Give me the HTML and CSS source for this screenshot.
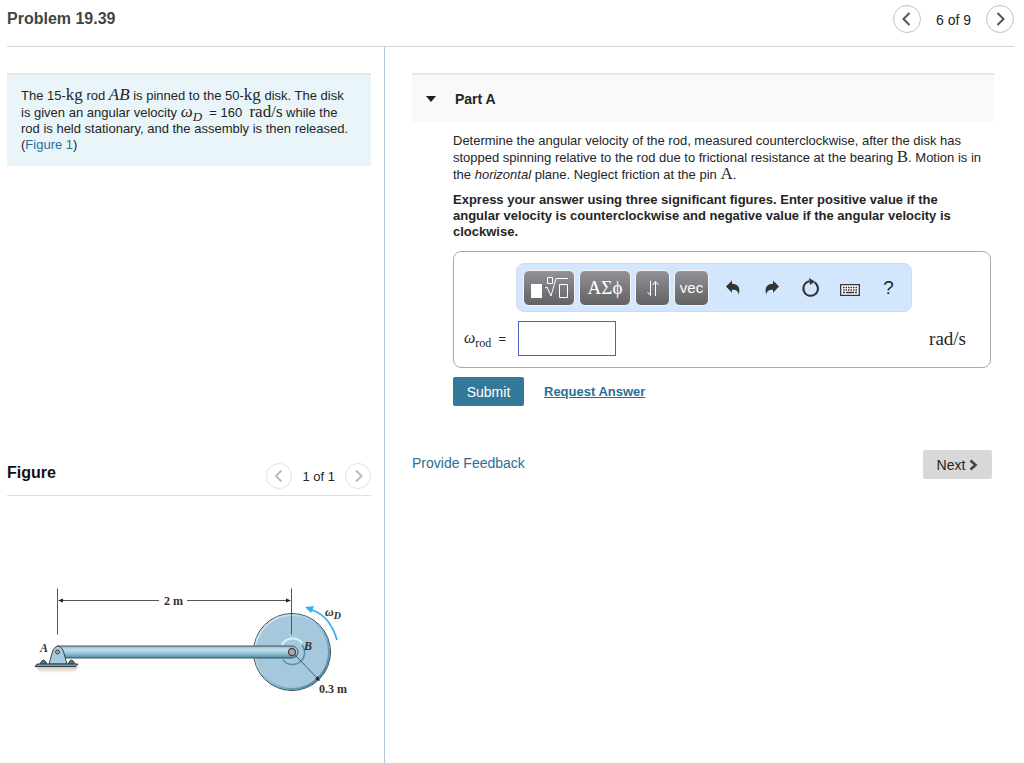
FILE: index.html
```html
<!DOCTYPE html>
<html lang="en">
<head>
<meta charset="utf-8">
<title>Problem 19.39</title>
<meta name="viewport" content="width=device-width, initial-scale=1">
<link rel="stylesheet" href="styles.css">
</head>
<body>
<header class="topbar">
  <h1 class="topbar-title">Problem 19.39</h1>
  <nav class="pager" aria-label="Problems">
    <button class="round" type="button" aria-label="Previous problem"><svg width="26" height="26" viewBox="0 0 26 26"><path d="M15.500 7 9.500 13l6 6"/></svg></button>
    <span class="pager-text">6 of 9</span>
    <button class="round" type="button" aria-label="Next problem"><svg width="26" height="26" viewBox="0 0 26 26"><path d="m10.500 7 6 6-6 6"/></svg></button>
  </nav>
</header>
<div class="columns">
  <aside class="side">
    <div class="side-problem">
      <p class="statement">The 15-<span class="math">kg</span> rod <i class="math">AB</i> is pinned to the 50-<span class="math">kg</span> disk. The disk is given an angular velocity <i class="math">ω<sub>D</sub></i> &nbsp;=&nbsp;160&nbsp; <span class="math">rad/s</span> while the rod is held stationary, and the assembly is then released. (<a class="link" href="#figure">Figure 1</a>)</p>
    </div>
    <section id="figure">
      <div class="figure-head">
        <h2 class="figure-title">Figure</h2>
        <nav class="pager pager-small" aria-label="Figures">
          <button class="round" type="button" aria-label="Previous figure" disabled><svg width="24" height="24" viewBox="0 0 24 24"><path d="m14.500 6.500-5.500 5.500 5.500 5.500"/></svg></button>
          <span class="pager-text">1 of 1</span>
          <button class="round" type="button" aria-label="Next figure" disabled><svg width="24" height="24" viewBox="0 0 24 24"><path d="m10 6.500 5.500 5.500-5.500 5.500"/></svg></button>
        </nav>
      </div>
      <svg class="diagram" viewBox="0 0 364 125" role="img" aria-label="Rod AB pinned to a disk">
        <defs>
          <linearGradient id="rod" x1="0" y1="0" x2="0" y2="1">
            <stop offset="0" stop-color="#8db4c8"/><stop offset=".3" stop-color="#c4deeb"/><stop offset=".6" stop-color="#9cc5d9"/><stop offset="1" stop-color="#4a8ca5"/>
          </linearGradient>
          <linearGradient id="ground" x1="0" y1="0" x2="0" y2="1">
            <stop offset="0" stop-color="#cfc5b1"/><stop offset="1" stop-color="#fff"/>
          </linearGradient>
          <linearGradient id="rim" x1="0" y1="0" x2="1" y2="1">
            <stop offset="0" stop-color="#e4f0f6"/><stop offset=".45" stop-color="#a5c8dc"/><stop offset="1" stop-color="#2c7890"/>
          </linearGradient>
        </defs>
        <circle cx="285" cy="72" r="38.500" fill="#a5c8dc" stroke="#34464e"/>
        <circle cx="285" cy="72" r="37" fill="none" stroke="url(#rim)" stroke-width="2"/>
        <path d="M275 65a12 12 0 0 1 20-2" fill="none" stroke="#e1f1f8" stroke-width="2"/>
        <path d="M295 65a12 12 0 0 1-19 15" fill="none" stroke="#4c91aa" stroke-width="1.500"/>
        <path d="M29 87h42l-4 6H33z" fill="url(#ground)"/>
        <path d="M50 66h235a6 6 0 0 1 0 12H50z" fill="url(#rod)" stroke="#40545e"/>
        <path d="m42 84 4-14q5-8 10 0l4 14z" fill="#a9cbdd" stroke="#33444e"/>
        <path d="M33 84q3.500-8 7 0zm28 0q3.500-8 7 0z" fill="#5d7580" stroke="#33444e"/>
        <path d="M30 84h41l-2 2.500H28z" fill="#739baf" stroke="#33444e"/>
        <circle cx="50.500" cy="72" r="2" fill="#b4a6a8" stroke="#444"/>
        <circle cx="285" cy="72" r="3.500" fill="#b4a6a8" stroke="#444" stroke-width="1.300"/>
        <path d="M50.500 8.500v46M284.500 8.500v46M52 20.500h100M180 20.500h103M288 75l23 24" fill="none" stroke="#555"/>
        <path d="m51 20.500 5-2v4zm233 0-5-2v4zM313 101l-5-2 3-3z" fill="#222"/>
        <path d="M330 60q-7-24-25-30" fill="none" stroke="#37afe7" stroke-width="1.800"/>
        <path d="m298 27 9-1-3 7z" fill="#37afe7"/>
        <g class="labels">
          <text x="157" y="25">2 m</text>
          <text x="33" y="72" class="it">A</text>
          <text x="297" y="70" class="it">B</text>
          <text x="318" y="36" class="it">ω<tspan class="tiny" dy="3">D</tspan></text>
          <text x="312" y="113">0.3 m</text>
        </g>
      </svg>
    </section>
  </aside>
  <main class="main">
    <button class="part" type="button" aria-expanded="true"><svg width="12" height="8" viewBox="0 0 12 8"><path d="M1 1h10L6 7z" fill="#1d1d1d"/></svg>Part A</button>
    <div class="part-body">
      <p class="para">Determine the angular velocity of the rod, measured counterclockwise, after the disk has stopped spinning relative to the rod due to frictional resistance at the bearing <span class="math">B</span>. Motion is in the <em>horizontal</em> plane. Neglect friction at the pin <span class="math">A</span>.</p>
      <p class="para strong">Express your answer using three significant figures. Enter positive value if the angular velocity is counterclockwise and negative value if the angular velocity is clockwise.</p>
      <div class="answer" id="answer">
        <div class="tools">
          <button class="key key-wide" type="button" aria-label="Templates"><svg width="40" height="26" viewBox="0 0 40 26"><path d="M2 9h11v14H2z" fill="#fff"/><path d="M18.500 2.500h5v6h-5zM16 13l2-1 4 9 5-17.500h12M30.500 9.500h8v13h-8z" fill="none" stroke="#fff"/></svg></button>
          <button class="key key-wide key-greek" type="button">ΑΣϕ</button>
          <button class="key" type="button" aria-label="Arrows"><svg width="14" height="18" viewBox="0 0 14 18"><path d="M4.500 2v14M1.500 13l3 3.500V13M9.500 17V3M6.500 6l3-3.500 3 3.500" fill="none" stroke="#fff"/></svg></button>
          <button class="key" type="button">vec</button>
          <button class="tool" type="button" aria-label="Undo"><svg width="16" height="16" viewBox="0 0 16 16"><path d="m1 6.500 6-6v3.200c6 .3 9 4 6.500 11.300.3-4-2.500-5.500-6.500-5.300v3z"/></svg></button>
          <button class="tool" type="button" aria-label="Redo"><svg width="16" height="16" viewBox="0 0 16 16"><path d="m15 6.500-6-6v3.200c-6 .3-9 4-6.500 11.300-.3-4 2.500-5.500 6.500-5.300v3z"/></svg></button>
          <button class="tool" type="button" aria-label="Reset"><svg width="20" height="20" viewBox="0 0 20 20"><path d="M13.500 4.300a7.300 7.300 0 1 1-5-1" fill="none" stroke="#333" stroke-width="2"/><path d="m8 0 6 3.500L9 7z"/></svg></button>
          <button class="tool" type="button" aria-label="Keyboard"><svg class="kb" width="20" height="12" viewBox="0 0 20 12"><path d="M.7.700h18.600v10.600H.7z" fill="#fff" stroke="#333" stroke-width="1.300"/><path d="M3 3.500h14M3 6h14" stroke="#333" stroke-width="1.500" stroke-dasharray="1.500 1"/><path d="M3 8.500h2m1 0h8m1 0h2" stroke="#333" stroke-width="1.300"/></svg></button>
          <button class="tool help" type="button" aria-label="Help">?</button>
        </div>
        <div class="entry">
          <label class="entry-label" for="omega"><i class="math">ω</i><sub class="math">rod</sub> &nbsp;=</label>
          <input class="entry-input" id="omega" type="text">
          <span class="unit">rad/s</span>
        </div>
      </div>
      <div class="actions">
        <button class="submit" type="button">Submit</button>
        <a class="request" href="#answer">Request Answer</a>
      </div>
    </div>
    <footer class="foot">
      <a class="link" href="#feedback">Provide Feedback</a>
      <button class="next" type="button">Next <svg width="9" height="12" viewBox="0 0 9 12"><path d="m1.500 1.500 5 4.500-5 4.500" fill="none" stroke="#444" stroke-width="2.600"/></svg></button>
    </footer>
  </main>
</div>
</body>
</html>
```
FILE: styles.css
```css
* { box-sizing: border-box; }
body {
  margin: 0;
  min-height: 100vh;
  display: flex;
  flex-direction: column;
  background: #fff;
  color: #252525;
  font: 13px/16px "Liberation Sans", Arial, sans-serif;
}
h1, h2, p { margin: 0; }
button { font: inherit; color: inherit; border: 0; padding: 0; background: none; cursor: pointer; }
svg { display: block; flex: none; }

.math { font-family: "Liberation Serif", "Times New Roman", serif; font-size: 17px; line-height: 16px; }
sub { font-size: 13px; line-height: 8px; }
.link { color: #2a7096; text-decoration: none; }

.topbar {
  display: flex;
  justify-content: space-between;
  align-items: flex-start;
  height: 47px;
  margin: 0 10px 0 7px;
  padding-top: 5px;
  border-bottom: 1px solid #d6d6d6;
}
.topbar-title { font-size: 16px; line-height: 28px; color: #444; }
.pager { display: flex; align-items: center; gap: 15px; font-size: 14px; }
.pager-text { padding-top: 2px; }
.round {
  width: 28px;
  height: 28px;
  border: 1px solid #c2c2c2;
  border-radius: 50%;
}
.round path { fill: none; stroke: #555; stroke-width: 2; }
.pager-small { gap: 10px; font-size: 13px; }
.pager-small .round { width: 26px; height: 26px; border-color: #e2e2e2; }
.pager-small .round path { stroke: #bbb; }

.columns { flex: 1; display: grid; grid-template-columns: 385px 1fr; }
.side { border-right: 1px solid #b4c8da; padding: 26px 13px 0 7px; }
.side-problem { min-height: 390px; }
.statement {
  padding: 12px 20px 12px 14px;
  min-height: 93px;
  background: #e9f5f8;
  border-top: 2px solid #dfe9e8;
}
.figure-head {
  display: flex;
  justify-content: space-between;
  height: 33px;
  border-bottom: 1px solid #dedede;
}
.figure-title { font-size: 16px; line-height: 20px; color: #111; }
.pager-small { align-self: flex-start; }
.diagram { width: 100%; margin-top: 84px; }
.labels { font: bold 12px "Liberation Serif", serif; fill: #333; }
.it { font-style: italic; }
.tiny { font-size: 10px; }

.main { padding: 26px 30px 0 27px; }
.part {
  display: flex;
  align-items: center;
  gap: 18px;
  width: 100%;
  height: 49px;
  padding-left: 13px;
  background: #f9f9f9;
  border-top: 2px solid #e8e8e8;
  font-size: 14px;
  font-weight: bold;
}
.part-body { padding-left: 41px; }
.para { margin-top: 11px; }
.strong { margin-top: 9px; padding-right: 24px; font-weight: bold; }
.answer {
  margin: 11px 3px 0 0;
  padding: 11px 10px;
  border: 1px solid #a8a8a8;
  border-radius: 8px;
}
.tools {
  display: flex;
  align-items: center;
  width: fit-content;
  height: 49px;
  margin-left: 52px;
  padding: 0 3px 0 6px;
  background: #d2e6fd;
  border: 1px solid #d4dae2;
  border-radius: 8px;
}
.key {
  display: flex;
  align-items: center;
  justify-content: center;
  width: 35px;
  height: 36px;
  margin-right: 4px;
  border: 1px solid #f4f4f4;
  border-radius: 6px;
  background: linear-gradient(#929297, #626265);
  color: #fff;
  font-size: 15px;
}
.key-wide { width: 52px; }
.key-greek { font-family: "Liberation Serif", serif; font-size: 19px; }
.tool { display: flex; align-items: center; justify-content: center; width: 39px; height: 36px; fill: #333; }
.kb { margin-top: 4px; }
.help { font-size: 19px; }
.entry { display: flex; align-items: center; margin-top: 9px; }
.entry-label { flex: 0 0 54px; }
.entry-label .math { font-size: 16px; }
.entry-label sub.math { font-size: 12px; line-height: 8px; }
.entry-input {
  width: 98px;
  height: 35px;
  padding: 4px;
  border: 1px solid #4169c0;
  background: #fff;
  font: inherit;
}
.unit { margin-left: auto; padding-right: 14px; font: 19px/20px "Liberation Serif", serif; }
.actions { display: flex; align-items: center; gap: 20px; margin-top: 9px; }
.submit {
  width: 71px;
  height: 29px;
  background: #34789a;
  border-radius: 2px;
  color: #fff;
  font-size: 14px;
}
.request { color: #2a7096; font-weight: bold; }
.foot {
  display: flex;
  justify-content: space-between;
  align-items: flex-start;
  margin-top: 44px;
  padding-right: 2px;
  font-size: 14px;
}
.foot .link { margin-top: 5px; }
.next {
  display: flex;
  align-items: center;
  justify-content: center;
  gap: 4px;
  width: 69px;
  height: 29px;
  background: #d8d8d8;
  border-radius: 2px;
}
```
